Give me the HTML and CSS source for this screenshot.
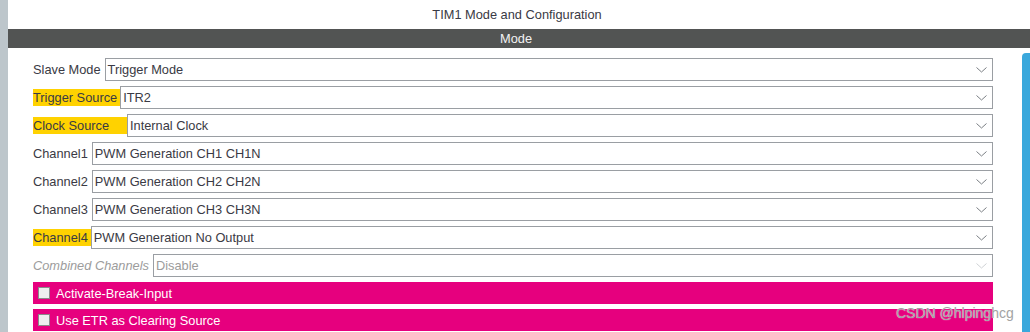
FILE: index.html
```html
<!DOCTYPE html>
<html lang="en">
<head>
  <meta charset="UTF-8">
  <title>TIM1 Mode and Configuration</title>
  <link rel="stylesheet" href="styles.css">
</head>
<body>
  <div class="side"></div>
  <div class="main">
    <div class="title">TIM1 Mode and Configuration</div>
    <div class="bar">Mode</div>

    <div class="panel">
      <div class="rows">
        <div class="row">
          <span class="label">Slave Mode</span>
          <div class="select">Trigger Mode<svg class="chev" width="11" height="6" viewBox="0 0 11 6"><path d="M0.5 0.5 L5.5 5 L10.5 0.5" /></svg></div>
        </div>
        <div class="row">
          <span class="label hl">Trigger Source</span>
          <div class="select">ITR2<svg class="chev" width="11" height="6" viewBox="0 0 11 6"><path d="M0.5 0.5 L5.5 5 L10.5 0.5" /></svg></div>
        </div>
        <div class="row">
          <span class="label hl clock">Clock Source</span>
          <div class="select">Internal Clock<svg class="chev" width="11" height="6" viewBox="0 0 11 6"><path d="M0.5 0.5 L5.5 5 L10.5 0.5" /></svg></div>
        </div>
        <div class="row">
          <span class="label">Channel1</span>
          <div class="select">PWM Generation CH1 CH1N<svg class="chev" width="11" height="6" viewBox="0 0 11 6"><path d="M0.5 0.5 L5.5 5 L10.5 0.5" /></svg></div>
        </div>
        <div class="row">
          <span class="label">Channel2</span>
          <div class="select">PWM Generation CH2 CH2N<svg class="chev" width="11" height="6" viewBox="0 0 11 6"><path d="M0.5 0.5 L5.5 5 L10.5 0.5" /></svg></div>
        </div>
        <div class="row">
          <span class="label">Channel3</span>
          <div class="select">PWM Generation CH3 CH3N<svg class="chev" width="11" height="6" viewBox="0 0 11 6"><path d="M0.5 0.5 L5.5 5 L10.5 0.5" /></svg></div>
        </div>
        <div class="row">
          <span class="label hl">Channel4</span>
          <div class="select">PWM Generation No Output<svg class="chev" width="11" height="6" viewBox="0 0 11 6"><path d="M0.5 0.5 L5.5 5 L10.5 0.5" /></svg></div>
        </div>
        <div class="row disabled">
          <span class="label">Combined Channels</span>
          <div class="select">Disable<svg class="chev" width="11" height="6" viewBox="0 0 11 6"><path d="M0.5 0.5 L5.5 5 L10.5 0.5" /></svg></div>
        </div>
        <div class="check"><span class="box"></span>Activate-Break-Input</div>
        <div class="check"><span class="box"></span>Use ETR as Clearing Source</div>
      </div>
      <div class="scroll"></div>
    </div>
  </div>
  <div class="mark">CSDN @hlpinghcg</div>
</body>
</html>
```

FILE: styles.css
```css
html, body { margin: 0; height: 332px; overflow: hidden; }
body {
  display: flex;
  background: #fff;
  color: #3a3a44;
  font-family: "Liberation Sans", Arial, sans-serif;
  font-size: 12.8px;
}
.side { width: 8px; background: #bdc6cb; flex-shrink: 0; }
.main { flex: 1; display: flex; flex-direction: column; }
.title {
  height: 29px;
  line-height: 29px;
  text-align: center;
  padding-right: 4px;
}
.bar {
  height: 19px;
  line-height: 19px;
  background: #525453;
  color: #f2f2f2;
  text-align: center;
  padding-right: 6px;
}
.panel { display: flex; }
.rows {
  flex: 1;
  display: flex;
  flex-direction: column;
  gap: 5px;
  padding: 10px 29px 0 25px;
}
.row { display: flex; align-items: center; height: 23px; }
.label {
  line-height: 17px;
  padding-right: 4px;
  white-space: nowrap;
}
.label.hl { background: #ffd200; padding-right: 3px; }
.label.clock { width: 91px; }
.select {
  flex: 1;
  height: 21px;
  line-height: 21px;
  border: 1px solid #9a9ea3;
  padding-left: 2px;
  position: relative;
  white-space: nowrap;
}
.chev {
  position: absolute;
  right: 5px;
  top: 8px;
  fill: none;
  stroke: #7b7f84;
  stroke-width: 1;
}
.disabled .label { color: #9c9c9c; font-style: italic; }
.disabled .select { color: #9c9c9c; }
.disabled .chev { stroke: #cfd2d5; }
.check {
  display: flex;
  align-items: center;
  height: 22px;
  background: #e6007e;
  color: #fff;
  padding-left: 5px;
}
.box {
  width: 10px;
  height: 10px;
  border: 1px solid #8a8a8a;
  background: #eeeeee;
  margin-right: 6px;
}
.scroll {
  width: 8px;
  margin-top: 5px;
  height: 279px;
  background: #3aa8dc;
  border-radius: 4px 0 0 0;
}
.mark {
  position: absolute;
  left: 896px;
  top: 305px;
  font-size: 14px;
  color: #a3a3a3;
  text-shadow: 0 0 1px #fff;
}
```
